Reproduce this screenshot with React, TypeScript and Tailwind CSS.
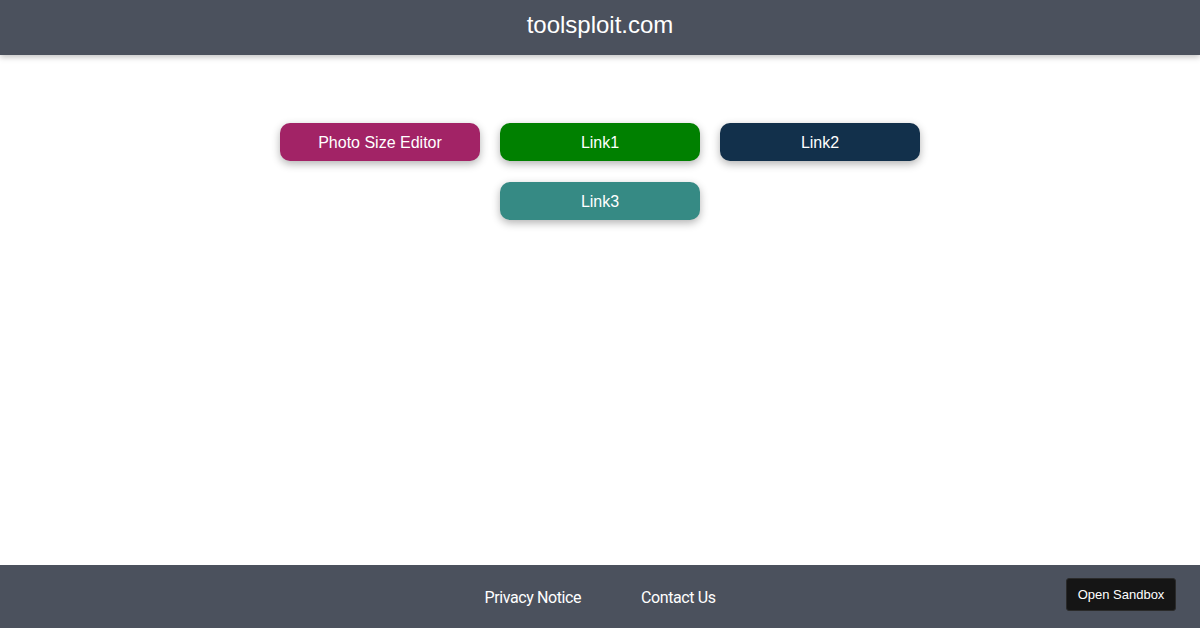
export default function App() {
  const links = [
    { label: "Photo Size Editor", bg: "bg-[#a22366]" },
    { label: "Link1", bg: "bg-[#008000]" },
    { label: "Link2", bg: "bg-[#12304b]" },
    { label: "Link3", bg: "bg-[#368a84]" },
  ];

  return (
    <div className="h-[630px] flex flex-col bg-white font-['Liberation_Sans',Arial,sans-serif]">
      <header className="h-[55px] bg-[#4b515d] flex items-center justify-center shadow-[0_2px_6px_rgba(0,0,0,0.25)] relative z-10">
        <h1 className="text-white text-[24px] leading-none pb-[6px]">toolsploit.com</h1>
      </header>

      <main className="flex-1 pt-[68px]">
        <div className="mx-auto w-[660px] flex flex-wrap justify-center gap-x-[20px] gap-y-[21px]">
          {links.map((l) => (
            <a
              key={l.label}
              href="#"
              className={`${l.bg} w-[200px] h-[38px] pt-[2px] rounded-[10px] flex items-center justify-center text-white text-[16px] shadow-[0_3px_8px_rgba(0,0,0,0.3)]`}
            >
              {l.label}
            </a>
          ))}
        </div>
      </main>

      <footer className="h-[63px] mb-[2px] bg-[#4b515d] flex items-center justify-center gap-[60px] relative">
        <a href="#" className="text-white text-[16px] font-['Roboto',sans-serif] tracking-[-0.4px] pt-[2px]">Privacy Notice</a>
        <a href="#" className="text-white text-[16px] font-['Roboto',sans-serif] tracking-[-0.4px] pt-[2px]">Contact Us</a>
        <button className="absolute right-[24px] top-[13px] w-[110px] h-[33px] bg-[#151515] rounded-[3px] border border-[#2a2a2a] text-white text-[13px] font-['Liberation_Sans',Arial,sans-serif]">
          Open Sandbox
        </button>
      </footer>
    </div>
  );
}
